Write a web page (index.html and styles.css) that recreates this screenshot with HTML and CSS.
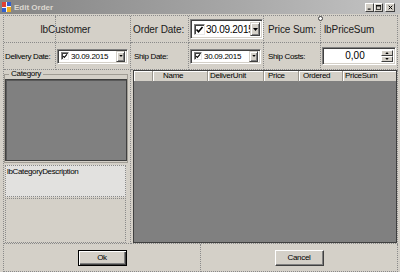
FILE: index.html
```html
<!DOCTYPE html>
<html>
<head>
<meta charset="utf-8">
<title>Edit Order</title>
<link rel="stylesheet" href="styles.css">
</head>
<body>
<div class="window">
  <div class="titlebar">
    <svg class="app-icon" width="9" height="10" viewBox="0 0 9 10">
      <rect x="0" y="0" width="9" height="10" fill="#f4f4f4"/>
      <rect x="0" y="0" width="4" height="5" fill="#e04030"/>
      <rect x="5" y="0" width="4" height="4" fill="#3060d0"/>
      <rect x="0" y="6" width="4" height="4" fill="#3060d0"/>
      <rect x="5" y="5" width="4" height="5" fill="#f0b020"/>
    </svg>
    <span class="title">Edit Order</span>
    <div class="caption-btns">
      <span class="cbtn"><svg width="7" height="7" viewBox="0 0 7 7"><rect x="1" y="5" width="4" height="1.5" fill="#000"/></svg></span>
      <span class="cbtn"><svg width="7" height="7" viewBox="0 0 7 7"><rect x="0.5" y="0.5" width="6" height="6" fill="none" stroke="#000"/><rect x="0.5" y="0.5" width="6" height="1.5" fill="#000"/></svg></span>
      <span class="cbtn close"><svg width="7" height="7" viewBox="0 0 7 7"><path d="M1 1 L6 6 M6 1 L1 6" stroke="#000" stroke-width="1.4"/></svg></span>
    </div>
  </div>

  <div class="layout">
    <div class="top-grid">
      <div class="cell span2 big">lbCustomer</div>
      <div class="cell big pad2">Order Date:</div>
      <div class="cell">
        <div class="dtp dtp-big">
          <span class="chk chk-big"><svg viewBox="0 0 9 9"><path d="M1.5 4.5 L3.5 6.7 L7.5 2" stroke="#000" stroke-width="1.6" fill="none"/></svg></span>
          <span class="dtp-text">30.09.2015</span>
          <span class="ddbtn"><svg width="5" height="3" viewBox="0 0 5 3"><path d="M0 0 H5 L2.5 3 Z" fill="#000"/></svg></span>
        </div>
      </div>
      <div class="cell big pad4 handle-cell">Price Sum:<span class="handle"></span></div>
      <div class="cell big pad3">lbPriceSum</div>

      <div class="cell small pad1">Delivery Date:</div>
      <div class="cell">
        <div class="dtp dtp-small">
          <span class="chk chk-small"><svg viewBox="0 0 9 9"><path d="M1.5 4.5 L3.5 6.7 L7.5 2" stroke="#000" stroke-width="1.6" fill="none"/></svg></span>
          <span class="dtp-text">30.09.2015</span>
          <span class="ddbtn"><svg width="5" height="3" viewBox="0 0 5 3"><path d="M0 0 H5 L2.5 3 Z" fill="#000"/></svg></span>
        </div>
      </div>
      <div class="cell small pad3">Ship Date:</div>
      <div class="cell">
        <div class="dtp dtp-small dtp-ship">
          <span class="chk chk-small"><svg viewBox="0 0 9 9"><path d="M1.5 4.5 L3.5 6.7 L7.5 2" stroke="#000" stroke-width="1.6" fill="none"/></svg></span>
          <span class="dtp-text">30.09.2015</span>
          <span class="ddbtn"><svg width="5" height="3" viewBox="0 0 5 3"><path d="M0 0 H5 L2.5 3 Z" fill="#000"/></svg></span>
        </div>
      </div>
      <div class="cell small pad4">Ship Costs:</div>
      <div class="cell">
        <div class="num">
          <span class="num-text">0,00</span>
          <span class="spin">
            <span class="spin-btn"><svg width="5" height="3" viewBox="0 0 5 3"><path d="M0 3 H5 L2.5 0 Z" fill="#000"/></svg></span>
            <span class="spin-btn"><svg width="5" height="3" viewBox="0 0 5 3"><path d="M0 0 H5 L2.5 3 Z" fill="#000"/></svg></span>
          </span>
        </div>
      </div>
    </div>

    <div class="mid-grid">
      <div class="cell left-col">
        <fieldset class="group">
          <legend>Category</legend>
          <div class="list"></div>
        </fieldset>
        <div class="desc">lbCategoryDescription</div>
        <div class="panel2"></div>
      </div>
      <div class="cell grid-col">
        <div class="dgv">
          <div class="dgv-head">
            <div class="hcell"></div>
            <div class="hcell h-name">Name</div>
            <div class="hcell h-unit">DeliverUnit</div>
            <div class="hcell h-price">Price</div>
            <div class="hcell h-ord">Ordered</div>
            <div class="hcell h-sum">PriceSum</div>
          </div>
          <div class="dgv-body"></div>
        </div>
      </div>
    </div>

    <div class="bottom-grid">
      <div class="cell bcell"><button class="btn btn-default">Ok</button></div>
      <div class="cell bcell"><button class="btn">Cancel</button></div>
    </div>
  </div>
</div>
</body>
</html>
```

FILE: styles.css
```css
* { box-sizing: border-box; }

body {
  margin: 0;
  width: 400px;
  height: 272px;
  overflow: hidden;
  background: #d4d0c8;
  font-family: "Liberation Sans", Arial, sans-serif;
  color: #000;
}

.titlebar {
  height: 14px;
  display: flex;
  align-items: center;
  padding: 0 5px 0 2px;
  background: linear-gradient(90deg, #848484 0%, #a8a8a8 60%, #c4c4c4 100%);
}

.app-icon { flex: none; }

.title {
  margin-left: 3px;
  font-size: 8px;
  font-weight: bold;
  color: #dcd8d0;
  white-space: nowrap;
}

.caption-btns {
  margin-left: auto;
  display: flex;
}

.cbtn {
  width: 9px;
  height: 9px;
  display: flex;
  align-items: center;
  justify-content: center;
  background: #d4d0c8;
  border: 1px solid;
  border-color: #fff #404040 #404040 #fff;
}

.cbtn svg { width: 5px; height: 5px; }

.cbtn.close { margin-left: 2px; width: 10px; }

.layout {
  margin: 1px 0 0 3px;
  width: 395px;
  border-left: 1px dotted #8a8a8a;
  border-top: 1px dotted #8a8a8a;
}

.cell {
  display: flex;
  align-items: center;
  min-width: 0;
  white-space: nowrap;
  border-right: 1px dotted #8a8a8a;
  border-bottom: 1px dotted #8a8a8a;
}

.top-grid {
  display: grid;
  grid-template-columns: 52px 75px 58px 75px 57px 77px;
  grid-template-rows: 27px 27px;
}

.span2 {
  grid-column: span 2;
  justify-content: center;
  position: relative;
  padding-right: 3px;
}

.span2::before {
  content: "";
  position: absolute;
  left: 51px;
  top: 0;
  bottom: 0;
  border-left: 1px dotted #8a8a8a;
}

.big { font-size: 10px; letter-spacing: -0.1px; color: #1a1a1a; }
.small { font-size: 8px; letter-spacing: -0.35px; }

.pad1 { padding-left: 1px; }
.pad2 { padding-left: 2px; }
.pad3 { padding-left: 3px; }
.pad4 { padding-left: 4px; }

.handle-cell { position: relative; }

.handle {
  position: absolute;
  right: -3px;
  top: 0;
  width: 5px;
  height: 5px;
  border-radius: 50%;
  border: 1px solid #404040;
  background: #fff;
}

/* DateTimePicker */
.dtp {
  display: flex;
  align-items: center;
  background: #fff;
  border: 1px solid;
  border-color: #808080 #fff #fff #808080;
  box-shadow: inset 1px 1px #404040, inset -1px -1px #d4d0c8;
  overflow: hidden;
  margin-left: 1px;
}

.dtp-big {
  width: 73px;
  height: 20px;
  padding: 2px 2px 2px 3px;
  font-size: 10px;
  letter-spacing: -0.25px;
}

.dtp-small {
  width: 71px;
  height: 15px;
  padding: 1px 2px 1px 2px;
  font-size: 8px;
  letter-spacing: -0.3px;
}

.dtp-ship { width: 71px; }

.chk {
  flex: none;
  display: flex;
  background: #fff;
  border: 1px solid;
  border-color: #808080 #e8e8e8 #e8e8e8 #808080;
  box-shadow: inset 1px 1px #404040;
}

.chk svg { width: 100%; height: 100%; }

.chk-big { width: 11px; height: 11px; }
.chk-small { width: 8px; height: 8px; margin-left: 1px; }

.dtp-text {
  flex: 1;
  min-width: 0;
  overflow: hidden;
  white-space: nowrap;
  margin-left: 2px;
}

.dtp-big .dtp-text { margin-left: 1px; }

.ddbtn {
  flex: none;
  align-self: stretch;
  width: 10px;
  display: flex;
  align-items: center;
  justify-content: center;
  background: #d4d0c8;
  border: 1px solid;
  border-color: #d4d0c8 #404040 #404040 #d4d0c8;
  box-shadow: inset 1px 1px #fff, inset -1px -1px #808080;
}

.dtp-small .ddbtn { width: 9px; }
.dtp-small .ddbtn svg { width: 4px; height: 2px; }

/* NumericUpDown */
.num {
  margin-left: 1px;
  width: 74px;
  height: 18px;
  display: flex;
  background: #fff;
  border: 1px solid;
  border-color: #808080 #fff #fff #808080;
  box-shadow: inset 1px 1px #404040, inset -1px -1px #d4d0c8;
  padding: 2px 2px 2px 2px;
}

.num-text {
  flex: 1;
  text-align: center;
  font-size: 10px;
  line-height: 12px;
  padding-left: 4px;
}

.spin {
  flex: none;
  width: 12px;
  display: flex;
  flex-direction: column;
}

.spin-btn {
  flex: 1;
  display: flex;
  align-items: center;
  justify-content: center;
  background: #d4d0c8;
  border: 1px solid;
  border-color: #fff #404040 #404040 #fff;
}

.spin-btn svg { width: 4px; height: 2px; }

/* Middle area */
.mid-grid {
  display: grid;
  grid-template-columns: 127px 267px;
  height: 174px;
}

.left-col {
  flex-direction: column;
  align-items: stretch;
  padding-right: 2px;
}

.group {
  margin: 0;
  padding: 1px 0 1px 0;
  border: 1px solid #a09c94;
  min-width: 0;
}

.group legend {
  font-size: 8px;
  line-height: 8px;
  letter-spacing: -0.3px;
  padding: 0 2px;
  margin-left: 4px;
}

.list {
  height: 82px;
  background: #808080;
  border: 1px solid #404040;
  box-shadow: inset 1px 1px #5a5a5a;
}

.desc {
  margin: 2px 2px 0 1px;
  height: 32px;
  background: #e2e1df;
  border: 1px dotted #8a8a8a;
  font-size: 8px;
  letter-spacing: -0.35px;
  padding: 1px 0 0 1px;
}

.panel2 {
  flex: 1;
  margin: 1px 2px 0 1px;
  border: 1px dotted #8a8a8a;
}

.grid-col {
  align-items: stretch;
  padding-left: 2px;
}

.dgv {
  flex: 1;
  display: flex;
  flex-direction: column;
  background: #808080;
  border: 1px solid #404040;
}

.dgv-head {
  display: grid;
  grid-template-columns: 19px 55px 56px 35px 44px 1fr;
  height: 11px;
  background: #d4d0c8;
}

.hcell {
  font-size: 8px;
  letter-spacing: -0.3px;
  line-height: 10px;
  border-right: 1px solid #9a968e;
  border-bottom: 1px solid #808080;
  box-shadow: inset 1px 1px #fff;
  overflow: hidden;
  white-space: nowrap;
}

.h-name { padding-left: 10px; }
.h-unit { padding-left: 2px; }
.h-price { padding-left: 4px; }
.h-ord { padding-left: 4px; }
.h-sum { padding-left: 2px; border-right: none; }

.dgv-body { flex: 1; }

/* Bottom buttons */
.bottom-grid {
  display: grid;
  grid-template-columns: 197px 197px;
  height: 28px;
}

.bcell { justify-content: center; }

.btn {
  width: 49px;
  height: 16px;
  padding: 0;
  font-family: "Liberation Sans", Arial, sans-serif;
  font-size: 8px;
  letter-spacing: -0.3px;
  color: #000;
  background: #d4d0c8;
  border: 1px solid;
  border-color: #fff #404040 #404040 #fff;
  box-shadow: inset -1px -1px #808080;
}

.btn-default {
  border: 1px solid #000;
  box-shadow: inset 1px 1px #fff, inset -1px -1px #404040, inset -2px -2px #808080;
}
```
